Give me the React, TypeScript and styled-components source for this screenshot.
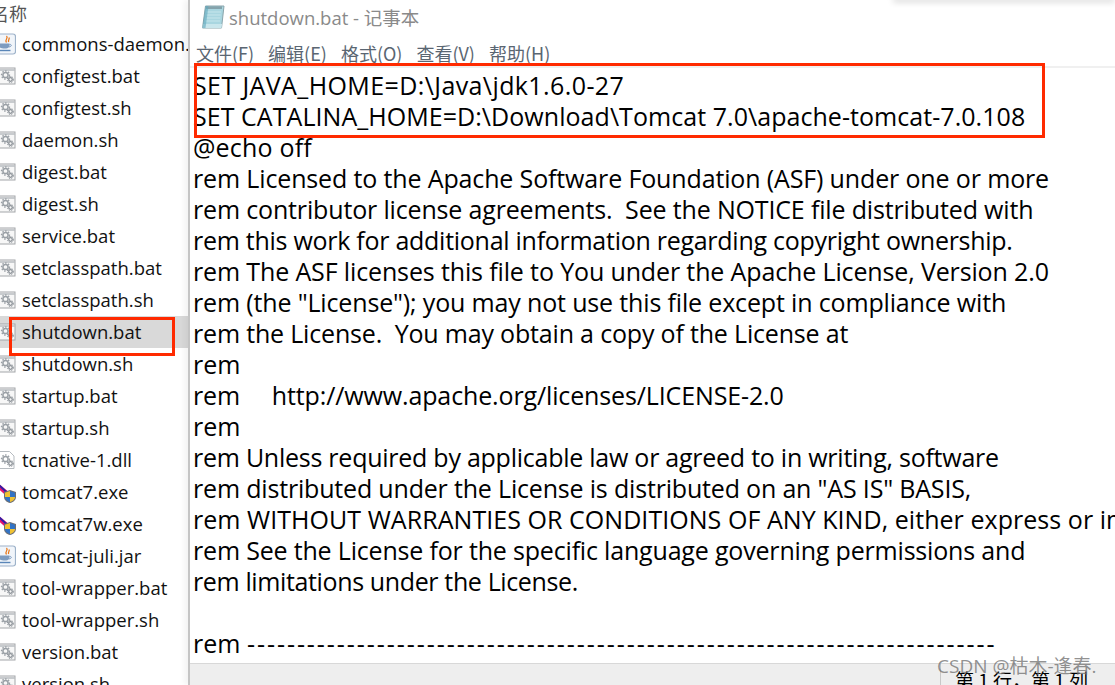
import styled, { createGlobalStyle } from 'styled-components';

const files = [
  { name: 'commons-daemon.', icon: 'jar' },
  { name: 'configtest.bat', icon: 'bat' },
  { name: 'configtest.sh', icon: 'bat' },
  { name: 'daemon.sh', icon: 'bat' },
  { name: 'digest.bat', icon: 'bat' },
  { name: 'digest.sh', icon: 'bat' },
  { name: 'service.bat', icon: 'bat' },
  { name: 'setclasspath.bat', icon: 'bat' },
  { name: 'setclasspath.sh', icon: 'bat' },
  { name: 'shutdown.bat', icon: 'bat' },
  { name: 'shutdown.sh', icon: 'bat' },
  { name: 'startup.bat', icon: 'bat' },
  { name: 'startup.sh', icon: 'bat' },
  { name: 'tcnative-1.dll', icon: 'dll' },
  { name: 'tomcat7.exe', icon: 'exe' },
  { name: 'tomcat7w.exe', icon: 'exe' },
  { name: 'tomcat-juli.jar', icon: 'jar' },
  { name: 'tool-wrapper.bat', icon: 'bat' },
  { name: 'tool-wrapper.sh', icon: 'bat' },
  { name: 'version.bat', icon: 'bat' },
  { name: 'version.sh', icon: 'bat' },
];

const menus = ['文件(F)', '编辑(E)', '格式(O)', '查看(V)', '帮助(H)'];

// the second value trims each line to the width it has in the original font
const lines: [string, number][] = [
  ['SET JAVA_HOME=D:\\Java\\jdk1.6.0-27', 0.4],
  ['SET CATALINA_HOME=D:\\Download\\Tomcat 7.0\\apache-tomcat-7.0.108', 0.05],
  ['@echo off', 0.2],
  ['rem Licensed to the Apache Software Foundation (ASF) under one or more', -0.14],
  ['rem contributor license agreements.  See the NOTICE file distributed with', -0.16],
  ['rem this work for additional information regarding copyright ownership.', -0.27],
  ['rem The ASF licenses this file to You under the Apache License, Version 2.0', -0.135],
  ['rem (the "License"); you may not use this file except in compliance with', -0.155],
  ['rem the License.  You may obtain a copy of the License at', -0.18],
  ['rem', 0],
  ['rem     http://www.apache.org/licenses/LICENSE-2.0', -0.13],
  ['rem', 0],
  ['rem Unless required by applicable law or agreed to in writing, software', -0.25],
  ['rem distributed under the License is distributed on an "AS IS" BASIS,', -0.18],
  ['rem WITHOUT WARRANTIES OR CONDITIONS OF ANY KIND, either express or implied.', 0.05],
  ['rem See the License for the specific language governing permissions and', -0.18],
  ['rem limitations under the License.', -0.37],
  ['', 0],
];

const GlobalStyle = createGlobalStyle`
  html, body {
    margin: 0;
    padding: 0;
    background: #fff;
    overflow: hidden;
  }
`;

const Gears = () => (
  <g fill="none">
    <circle cx="5.500" cy="8" r="2.600" stroke="#9aa0a6" strokeWidth="1.500" />
    <circle cx="5.500" cy="8" r="4" stroke="#9aa0a6" strokeWidth="1.300" strokeDasharray="1.500 1.500" />
    <circle cx="10.500" cy="12.500" r="1.800" stroke="#8a9096" strokeWidth="1.300" />
    <circle cx="10.500" cy="12.500" r="3" stroke="#8a9096" strokeWidth="1" strokeDasharray="1.300 1.200" />
  </g>
);

const FileIcon = ({ kind }: { kind: string }) => {
  if (kind === 'jar') {
    return (
      <svg width="16" height="22" viewBox="0 0 16 22">
        <rect x="-3" y="1" width="18.500" height="20" rx="2.500" fill="#f1f5fa" stroke="#9db2c9" strokeWidth="1.200" />
        <path d="M6.500 3c2.500 2.500-2.500 3.500 0 6.500M9 4.500c1 2-1.500 2.500-.3 4.500" fill="none" stroke="#e8791c" strokeWidth="1.300" />
        <path d="M-1 10.500h10.500v2c0 2.500-2.500 3-5 3s-5.500-.5-5.500-3z" fill="#7e9cc0" />
        <path d="M9.500 11.500c2.500-.5 2.500 2-.5 2.500" fill="none" stroke="#7e9cc0" />
        <path d="M-2 17.500h12.500" stroke="#5a86b8" strokeWidth="1.400" />
      </svg>
    );
  }
  if (kind === 'exe') {
    return (
      <svg width="16" height="22" viewBox="0 0 16 22">
        <path d="M-2 2l12 10-3 3.500-9-8z" fill="#e3166f" />
        <path d="M-1 4l9 8.500" stroke="#2a1fa8" strokeWidth="1.800" />
        <path d="M10 9l6 2v5c0 3-3 5.500-6 6-3-.5-6-3-6-6v-5z" fill="#6d6f74" />
        <path d="M10 10l5 1.700V16h-5z" fill="#3273c4" />
        <path d="M10 10v6H5v-4.300z" fill="#f1c232" />
        <path d="M10 16v5c-2.500-.5-5-2.500-5-5z" fill="#3273c4" />
        <path d="M10 16h5c0 2.500-2.500 4.500-5 5z" fill="#f1c232" />
      </svg>
    );
  }
  if (kind === 'dll') {
    return (
      <svg width="16" height="18" viewBox="0 0 16 18">
        <path d="M-2 .5h11.500l4.500 4.500v12.500H-2z" fill="#fff" stroke="#b6bbc0" />
        <Gears />
      </svg>
    );
  }
  return (
    <svg width="16" height="18" viewBox="0 0 16 18">
      <rect x="-2" y="1" width="17" height="16" fill="#f7f7f7" stroke="#a3a6a9" />
      <path d="M-2 3h17" stroke="#b9bcc0" strokeWidth="1.500" />
      <Gears />
    </svg>
  );
};

const NotepadIcon = () => (
  <svg width="24" height="24" viewBox="0 0 24 24">
    <path d="M4.500 1h18.500l-2.500 22H1.500z" fill="#a9d6e0" stroke="#8aa5ac" />
    <path d="M1.500 23h19l.5-4H2z" fill="#c9e6ec" />
    <path d="M6 1.500v2.500M8 1.500v2.500M10 1.500v2.500M12 1.500v2.500M14 1.500v2.500M16 1.500v2.500M18 1.500v2.500M20 1.500v2.500" stroke="#6d8088" strokeWidth="1.200" />
    <path d="M5 7h15M4.700 10h15M4.300 13h15M4 16h15" stroke="#c6e6ec" />
    <path d="M4.500 1L1.500 23h3l3-22z" fill="#63a8bd" opacity="0.6" />
  </svg>
);

const App = () => (
  <>
    <GlobalStyle />
    <Page>
      <Explorer>
        <ColumnTitle>名称</ColumnTitle>
        {files.map((file) => (
          <FileRow key={file.name} $selected={file.name === 'shutdown.bat'}>
            <FileIcon kind={file.icon} />
            <FileName>{file.name}</FileName>
          </FileRow>
        ))}
        <FileMark />
      </Explorer>
      <Notepad>
        <TitleBar>
          <NotepadIcon />
          <TitleText>shutdown.bat - 记事本</TitleText>
        </TitleBar>
        <MenuBar>
          {menus.map((menu) => (
            <MenuItem key={menu}>{menu}</MenuItem>
          ))}
        </MenuBar>
        <Editor>
          {lines.map(([text, spacing], index) => (
            <EditorLine key={index} $spacing={spacing}>
              {text}
            </EditorLine>
          ))}
          <EditorLine $spacing={0}>
            rem <Dashes>---------------------------------------------------------------------------</Dashes>
          </EditorLine>
        </Editor>
        <StatusBar>
          <StatusCell>第 1 行，第 1 列</StatusCell>
        </StatusBar>
        <EnvMark />
      </Notepad>
      <TopShadow />
      <Watermark>CSDN @枯木-逢春.</Watermark>
    </Page>
  </>
);

export default App;

const Page = styled.div`
  position: relative;
  width: 1115px;
  height: 685px;
  overflow: hidden;
  display: flex;
  font-family: 'Open Sans', 'Noto Sans CJK SC', sans-serif;
  color: #000;
`;

const Explorer = styled.div`
  position: relative;
  flex: 0 0 188px;
  height: 685px;
  overflow: hidden;
`;

const ColumnTitle = styled.div`
  height: 28px;
  margin-left: -9px;
  font-family: 'Noto Sans CJK SC', sans-serif;
  font-size: 18px;
  line-height: 26px;
  color: #555;
`;

const FileRow = styled.div<{ $selected?: boolean }>`
  display: flex;
  align-items: center;
  height: 32px;
  gap: 6px;
  background: ${({ $selected }) => ($selected ? '#d9d9d9' : 'transparent')};

  svg {
    flex: none;
  }
`;

const FileName = styled.span`
  font-size: 18.500px;
  white-space: nowrap;
  color: #111;
  position: relative;
  top: -1px;
`;

const FileMark = styled.div`
  position: absolute;
  left: 9px;
  top: 317px;
  width: 166px;
  height: 39px;
  box-sizing: border-box;
  border: 3px solid #ff2a00;
`;

const Notepad = styled.div`
  position: relative;
  flex: 1;
  min-width: 0;
  height: 685px;
  display: flex;
  flex-direction: column;
  border-left: 2px solid #c4c4c4;
  box-shadow: -4px 0 6px rgba(0, 0, 0, 0.05);
`;

const TitleBar = styled.div`
  display: flex;
  align-items: center;
  gap: 4px;
  height: 36px;
  padding: 0 0 3px 11px;
  box-sizing: border-box;
`;

const TitleText = styled.span`
  font-size: 18.500px;
  color: #8a8a8a;
`;

const MenuBar = styled.div`
  display: flex;
  gap: 14px;
  height: 32px;
  padding: 6px 0 0 6px;
  box-sizing: border-box;
  border-bottom: 2px solid #f0f0f0;
`;

const MenuItem = styled.span`
  font-family: 'Noto Sans CJK SC', sans-serif;
  font-size: 18px;
  line-height: 22px;
  color: #5a6672;
`;

const Editor = styled.div`
  flex: 1;
  min-height: 0;
  overflow: hidden;
  padding: 2px 0 0 3px;
`;

const EditorLine = styled.div<{ $spacing: number }>`
  height: 31px;
  font-size: 25px;
  line-height: 31px;
  white-space: pre;
  letter-spacing: ${({ $spacing }) => $spacing}px;
`;

const Dashes = styled.span`
  letter-spacing: 1.95px;
`;

const StatusBar = styled.div`
  flex: 0 0 21px;
  display: flex;
  justify-content: flex-end;
  background: #eeeeee;
  border-top: 1px solid #d8d8d8;
  overflow: hidden;
`;

const StatusCell = styled.div`
  width: 175px;
  box-sizing: border-box;
  padding-left: 14px;
  border-left: 1px solid #c8c8c8;
  font-family: 'Noto Sans CJK SC', sans-serif;
  font-size: 19px;
  line-height: 32px;
  white-space: nowrap;
`;

const EnvMark = styled.div`
  position: absolute;
  left: 4px;
  top: 63px;
  width: 851px;
  height: 75px;
  box-sizing: border-box;
  border: 3px solid #ff2a00;
`;

const TopShadow = styled.div`
  position: absolute;
  right: 0;
  top: -4px;
  width: 222px;
  height: 4px;
  box-shadow: 0 2px 6px rgba(0, 0, 0, 0.18);
`;

const Watermark = styled.div`
  position: absolute;
  left: 937px;
  top: 654px;
  font-size: 19px;
  line-height: 24px;
  color: rgba(110, 110, 110, 0.75);
  white-space: nowrap;
`;
